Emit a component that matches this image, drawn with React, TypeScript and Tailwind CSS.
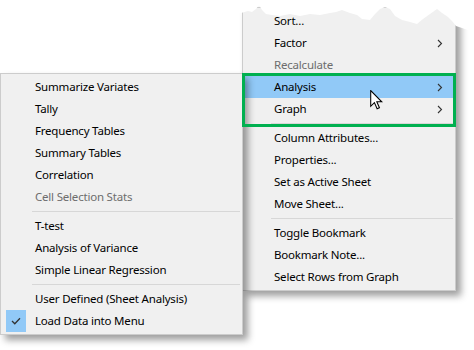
import React from 'react';

type Item = { label?: string; sub?: boolean; disabled?: boolean; hot?: boolean; checked?: boolean; sep?: boolean };

const mainItems: Item[] = [
  { label: 'Sort...' },
  { label: 'Factor', sub: true },
  { label: 'Recalculate', disabled: true },
  { label: 'Analysis', sub: true, hot: true },
  { label: 'Graph', sub: true },
  { sep: true },
  { label: 'Column Attributes...' },
  { label: 'Properties...' },
  { label: 'Set as Active Sheet' },
  { label: 'Move Sheet...' },
  { sep: true },
  { label: 'Toggle Bookmark' },
  { label: 'Bookmark Note...' },
  { label: 'Select Rows from Graph' },
];

const analysisItems: Item[] = [
  { label: 'Summarize Variates' },
  { label: 'Tally' },
  { label: 'Frequency Tables' },
  { label: 'Summary Tables' },
  { label: 'Correlation' },
  { label: 'Cell Selection Stats', disabled: true },
  { sep: true },
  { label: 'T-test' },
  { label: 'Analysis of Variance' },
  { label: 'Simple Linear Regression' },
  { sep: true },
  { label: 'User Defined (Sheet Analysis)' },
  { label: 'Load Data into Menu', checked: true },
];

function Chevron() {
  return (
    <svg width="6" height="9" viewBox="0 0 6 9" className="shrink-0">
      <path d="M1 1 L4.5 4.5 L1 8" fill="none" stroke="#333" strokeWidth="1.1" />
    </svg>
  );
}

function Row({ item, textLeft }: { item: Item; textLeft: number }) {
  if (item.sep) {
    return (
      <div className="h-[7px] flex items-center" style={{ paddingLeft: textLeft - 4 }}>
        <div className="h-px w-full bg-[#d7d7d7] mr-[2px]" />
      </div>
    );
  }
  return (
    <div className={`h-[22px] flex items-center pr-[12px] ${item.hot ? 'bg-[#91c9f7]' : ''}`}>
      <div className="w-[20px] h-[22px] ml-[5px] flex items-center justify-center shrink-0">
        {item.checked && (
          <div className="w-[20px] h-[22px] bg-[#91c9f7] flex items-center justify-center">
            <svg width="10" height="8" viewBox="0 0 10 8">
              <path d="M1 4 L3.8 6.8 L9 1.2" fill="none" stroke="#333" strokeWidth="1.3" />
            </svg>
          </div>
        )}
      </div>
      <span
        className={`flex-1 whitespace-nowrap ${item.disabled ? 'text-[#6d6d6d]' : 'text-black'}`}
        style={{ paddingLeft: textLeft - 26 }}
      >
        {item.label}
      </span>
      {item.sub && <Chevron />}
    </div>
  );
}

function Cursor() {
  return (
    <svg width="13" height="20" viewBox="0 0 12 19" className="absolute left-[370px] top-[90px]">
      <path d="M0.5 0.5 L0.5 15.5 L4 12 L6.6 17.8 L8.8 16.8 L6.3 11.2 L11 11.2 Z" fill="#fff" stroke="#000" strokeWidth="1" strokeLinejoin="miter" />
    </svg>
  );
}

export default function App() {
  return (
    <div
      className="relative w-[474px] h-[350px] bg-white overflow-hidden text-[11.5px] tracking-[-0.2px] leading-none"
      style={{ fontFamily: '"Noto Sans", "Segoe UI", sans-serif' }}
    >
      {/* main context menu */}
      <div className="absolute left-[242px] top-[7px] w-[214px] h-[284px] bg-[#f0f0f0] border border-[#cccccc] pt-[2px] shadow-[5px_5px_7px_rgba(0,0,0,0.38)]">
        {mainItems.map((it, i) => (
          <Row key={i} item={it} textLeft={32} />
        ))}
      </div>

      {/* torn top edge */}
      <svg width="474" height="34" viewBox="0 0 474 34" className="absolute left-0 top-0">
        <path
          d="M230 0 L230 14 L241 13 L248 11 L252 12 L256 9 L259 5 L262 10 L266 14 L272 15 L280 16 L290 14 L300 16 L310 14 L320 15 L330 13 L336 12 L342 10 L350 13 L357 15 L362 19 L370 20 L375 14 L380 9 L385 7 L390 9 L395 16 L402 20 L410 22 L417 24 L423 19 L430 14 L437 9 L442 13 L448 17 L452 21 L456 26 L474 32 L474 0 Z"
          fill="#ffffff"
        />
      </svg>

      {/* Analysis submenu */}
      <div className="absolute left-0 top-[73px] w-[243px] h-[262px] bg-[#f0f0f0] border border-[#cccccc] pt-[2px] shadow-[5px_5px_7px_rgba(0,0,0,0.38)]">
        {analysisItems.map((it, i) => (
          <Row key={i} item={it} textLeft={35} />
        ))}
      </div>

      {/* green callout */}
      <div className="absolute left-[242px] top-[73px] w-[214px] h-[54px] border-[3px] border-[#00b050]" />

      <Cursor />
    </div>
  );
}
